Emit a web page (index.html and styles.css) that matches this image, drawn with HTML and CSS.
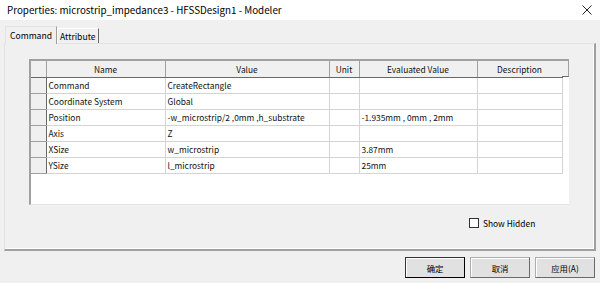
FILE: index.html
```html
<!DOCTYPE html>
<html lang="en">
<head>
    <meta charset="UTF-8">
    <title>Properties</title>
    <link rel="stylesheet" href="styles.css">
</head>
<body>
    <div class="window">
        <div class="titlebar">
            <span class="title">Properties: microstrip_impedance3 - HFSSDesign1 - Modeler</span>
            <svg class="close" width="10" height="10" viewBox="0 0 10 10"><path d="M0.5 0.5L9.5 9.5M9.5 0.5L0.5 9.5" stroke="#222" stroke-width="1"/></svg>
        </div>

        <div class="dialog">
            <div class="tabs">
                <div class="tab active">Command</div>
                <div class="tab">Attribute</div>
            </div>

            <div class="panel">
                <div class="grid">
                    <table class="props">
                        <colgroup>
                            <col class="c-row">
                            <col class="c-name">
                            <col class="c-value">
                            <col class="c-unit">
                            <col class="c-eval">
                            <col class="c-desc">
                        </colgroup>
                        <thead>
                            <tr>
                                <th class="corner"></th>
                                <th>Name</th>
                                <th>Value</th>
                                <th>Unit</th>
                                <th>Evaluated Value</th>
                                <th>Description</th>
                            </tr>
                        </thead>
                        <tbody>
                            <tr><td class="rh"></td><td>Command</td><td>CreateRectangle</td><td></td><td></td><td></td></tr>
                            <tr><td class="rh"></td><td>Coordinate System</td><td>Global</td><td></td><td></td><td></td></tr>
                            <tr><td class="rh"></td><td>Position</td><td>-w_microstrip/2 ,0mm ,h_substrate</td><td></td><td>-1.935mm , 0mm , 2mm</td><td></td></tr>
                            <tr><td class="rh"></td><td>Axis</td><td>Z</td><td></td><td></td><td></td></tr>
                            <tr><td class="rh"></td><td>XSize</td><td>w_microstrip</td><td></td><td>3.87mm</td><td></td></tr>
                            <tr><td class="rh"></td><td>YSize</td><td>l_microstrip</td><td></td><td>25mm</td><td></td></tr>
                        </tbody>
                    </table>
                    <div class="header-fill"></div>
                </div>

                <label class="show-hidden"><span class="check"></span>Show Hidden</label>
            </div>

            <div class="buttons">
                <button class="btn default">确定</button>
                <button class="btn">取消</button>
                <button class="btn">应用(A)</button>
            </div>
        </div>
    </div>
</body>
</html>
```

FILE: styles.css
```css
* { margin: 0; padding: 0; box-sizing: border-box; }
body { width: 600px; height: 283px; overflow: hidden; background: #f0f0f0; font-family: 'Noto Sans CJK SC', 'Noto Sans', sans-serif; color: #000; }

.window { width: 600px; height: 283px; display: flex; flex-direction: column; }

.titlebar { height: 20px; background: #fff; display: flex; align-items: center; justify-content: space-between; padding: 0 8px 0 7px; }
.title { font-size: 9.8px; color: #000; line-height: 20px; }

.dialog { flex: 1; padding: 6px 4px 0 4px; display: flex; flex-direction: column; }

.tabs { display: flex; height: 17px; align-items: flex-end; padding-left: 1px; position: relative; z-index: 1; }
.tab { font-size: 8.6px; line-height: 14px; height: 15px; padding: 0 2px 0 2px; border-left: 1px solid #fff; border-top: 1px solid #fff; border-right: 1px solid #696969; background: #f0f0f0; }
.tab.active { height: 18px; padding: 1px 4px 0 4px; margin-bottom: -1px; border-left-color: #e3e3e3; border-top-color: #e3e3e3; border-right-color: #a0a0a0; }

.panel { height: 208px; border-top: 1px solid #e3e3e3; border-left: 1px solid #e3e3e3; border-right: 2px solid #a0a0a0; border-bottom: 2px solid #a0a0a0; box-shadow: inset -1px -1px 0 #fff; padding: 15px 0 0 24px; }

.grid { position: relative; width: 540px; height: 146px; background: #fff; border-left: 2px solid #a0a0a0; border-top: 2px solid #a0a0a0; border-bottom: 1px solid #e3e3e3; }

.props { border-collapse: collapse; table-layout: fixed; width: 531px; font-size: 8.4px; color: #111; }
.c-row { width: 15px; }
.c-name { width: 119px; }
.c-value { width: 164px; }
.c-unit { width: 30px; }
.c-eval { width: 118px; }
.c-desc { width: 85px; }

.props th { height: 16px; background: #f0f0f0; font-weight: normal; text-align: center; border-right: 1px solid #a0a0a0; border-bottom: 1px solid #696969; padding: 0; line-height: 14px; }
.props td { height: 16px; border-right: 1px solid #d4d4d4; border-bottom: 1px solid #d4d4d4; padding: 0 2px; line-height: 14px; white-space: nowrap; overflow: hidden; }
.props td.rh { background: #f0f0f0; border-right: 1px solid #696969; border-bottom: 1px solid #a0a0a0; }

.header-fill { position: absolute; top: 0; left: 531px; width: 7px; height: 16px; background: #f0f0f0; border-bottom: 1px solid #696969; border-right: 1px solid #a0a0a0; }

.show-hidden { display: flex; align-items: center; gap: 4px; font-size: 8.4px; margin: 11px 0 0 440px; height: 14px; }
.check { width: 10px; height: 10px; background: #fff; border: 1px solid #333; }

.buttons { display: flex; justify-content: flex-end; gap: 5px; padding: 6px 1px 0 0; }
.btn { width: 60px; height: 21px; font-family: 'Noto Sans CJK SC', sans-serif; font-size: 8.4px; background: #e1e1e1; border: 1px solid #adadad; border-right-color: #696969; border-bottom-color: #696969; box-shadow: inset 1px 1px 0 #fff; color: #000; }
.btn.default { border: 1px solid #333; border-right-color: #000; border-bottom-color: #000; }
```
